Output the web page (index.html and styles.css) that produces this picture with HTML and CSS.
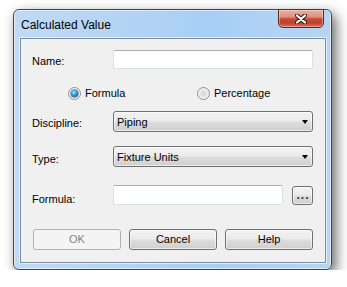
FILE: index.html
```html
<!DOCTYPE html>
<html>
<head>
<meta charset="utf-8">
<link rel="stylesheet" href="styles.css">
</head>
<body>
<div class="window">
  <div class="titlebar">
    <span class="title">Calculated Value</span>
    <div class="close">
      <svg width="12" height="10" viewBox="0 0 12 10">
        <path d="M2 1.5 L10 8.5 M10 1.5 L2 8.5" stroke="#3b1c17" stroke-width="4.2" stroke-linecap="round" fill="none"/>
        <path d="M2 1.5 L10 8.5 M10 1.5 L2 8.5" stroke="#ffffff" stroke-width="2.2" stroke-linecap="round" fill="none"/>
      </svg>
    </div>
  </div>
  <div class="client">
    <div class="row row-name">
      <span class="lbl lbl-name">Name:</span>
      <div class="textbox"></div>
    </div>
    <div class="radios">
      <div class="radio-item"><span class="radio checked"><span class="dot"></span></span><span>Formula</span></div>
      <div class="radio-item"><span class="radio"></span><span>Percentage</span></div>
    </div>
    <div class="row row-disc">
      <span class="lbl lbl-disc">Discipline:</span>
      <div class="combo"><span>Piping</span><span class="arrow"></span></div>
    </div>
    <div class="row row-type">
      <span class="lbl lbl-type">Type:</span>
      <div class="combo"><span>Fixture Units</span><span class="arrow"></span></div>
    </div>
    <div class="row row-formula">
      <span class="lbl lbl-formula">Formula:</span>
      <div class="textbox formula-box"></div>
      <div class="btn dots-btn">...</div>
    </div>
    <div class="buttons">
      <div class="btn disabled">OK</div>
      <div class="btn">Cancel</div>
      <div class="btn">Help</div>
    </div>
  </div>
</div>
</body>
</html>
```
FILE: styles.css
```css
html, body {
  margin: 0;
  padding: 0;
  background: #ffffff;
}
body {
  font-family: "Liberation Sans", Arial, sans-serif;
  font-size: 11px;
  color: #000;
}
.window {
  margin: 9px 0 0 13px;
  width: 319px;
  height: 261px;
  box-sizing: border-box;
  border: 1px solid #3d4652;
  border-radius: 6px;
  background: linear-gradient(to right, #c0daf3 0%, #b0d2f4 45%, #a7cef6 60%, #b7d5f2 100%);
  box-shadow: 4px 5px 13px rgba(0,0,0,0.6), inset 0 0 0 1px rgba(255,255,255,0.55);
  padding: 0 5px 6px 6px;
  display: flex;
  flex-direction: column;
}
.titlebar {
  height: 28px;
  display: flex;
  align-items: flex-start;
  justify-content: space-between;
}
.title {
  font-size: 12px;
  margin-top: 8px;
  padding-left: 1px;
  color: #000;
}
.close {
  margin-top: -1px;
  margin-right: 2px;
  width: 46px;
  height: 19px;
  box-sizing: border-box;
  border: 1px solid #5e2a22;
  border-radius: 0 0 5px 5px;
  background: linear-gradient(#eab0a2 0%, #df9281 40%, #c94b3b 52%, #c03f2c 75%, #d4705c 100%);
  box-shadow: inset 0 0 0 1px rgba(255,255,255,0.35);
  display: flex;
  align-items: center;
  justify-content: center;
}
.close svg { display: block; margin-top: 1px; }
.client {
  height: 225px;
  box-sizing: border-box;
  border: 1px solid #7f8da0;
  box-shadow: 0 0 0 1px rgba(255,255,255,0.6);
  background: #f0f0f0;
  padding: 11px 12px 0 11px;
}
.row {
  display: flex;
  align-items: flex-start;
}
.lbl {
  width: 81px;
  flex: none;
  line-height: 13px;
}
.lbl-name { padding-top: 5px; }
.lbl-disc { padding-top: 6px; }
.lbl-type { padding-top: 7px; }
.lbl-formula { padding-top: 8px; }
.textbox {
  width: 200px;
  height: 19px;
  box-sizing: border-box;
  background: #fff;
  border: 1px solid #dbdfe6;
  border-top-color: #abadb3;
  border-radius: 2px;
}
.radios {
  margin-top: 18px;
  height: 13px;
  padding-left: 36px;
  display: grid;
  grid-template-columns: 129px auto;
}
.radio-item {
  display: flex;
  align-items: center;
  height: 13px;
  line-height: 13px;
}
.radio {
  width: 13px;
  height: 13px;
  box-sizing: border-box;
  border-radius: 50%;
  border: 1px solid #8e8f8f;
  background: radial-gradient(circle at 50% 50%, #d4d4d4 0%, #e6e6e6 45%, #f6f6f6 70%, #ffffff 100%);
  margin-right: 4px;
  display: flex;
  align-items: center;
  justify-content: center;
  flex: none;
}
.dot {
  width: 7px;
  height: 7px;
  border-radius: 50%;
  background: radial-gradient(circle at 40% 35%, #a6e6ff 0%, #3aa1df 40%, #0e5e9e 80%, #0b4575 100%);
  box-shadow: 0 0 0 0.5px #16507f;
}
.row-disc { margin-top: 11px; }
.row-type { margin-top: 14px; }
.row-formula { margin-top: 18px; height: 20px; }
.combo {
  width: 200px;
  height: 21px;
  box-sizing: border-box;
  border: 1px solid #707070;
  border-radius: 3px;
  background: linear-gradient(#f2f2f2 0%, #ebebeb 48%, #dddddd 52%, #cfcfcf 100%);
  box-shadow: inset 0 0 0 1px rgba(255,255,255,0.6);
  display: flex;
  align-items: center;
  justify-content: space-between;
  padding: 0 4px 0 3px;
}
.arrow {
  width: 0;
  height: 0;
  border-left: 3.5px solid transparent;
  border-right: 3.5px solid transparent;
  border-top: 4px solid #000;
}
.formula-box {
  width: 170px;
  height: 20px;
}
.btn {
  height: 21px;
  box-sizing: border-box;
  border: 1px solid #707070;
  border-radius: 3px;
  background: linear-gradient(#f2f2f2 0%, #ebebeb 48%, #dddddd 52%, #cfcfcf 100%);
  box-shadow: inset 0 0 0 1px rgba(255,255,255,0.6);
  display: flex;
  align-items: center;
  justify-content: center;
  line-height: 13px;
}
.dots-btn {
  width: 21px;
  height: 19px;
  margin-left: 9px;
  margin-top: 1px;
  font-size: 12px;
  font-weight: bold;
  color: #1d3c6a;
  letter-spacing: 1px;
  padding-left: 1px;
}
.buttons {
  margin-top: 24px;
  padding-left: 1px;
  display: grid;
  grid-template-columns: 88px 88px 88px;
  column-gap: 8px;
}
.btn.disabled {
  border-color: #adb2b5;
  background: #f4f4f4;
  box-shadow: none;
  color: #838383;
}
```
